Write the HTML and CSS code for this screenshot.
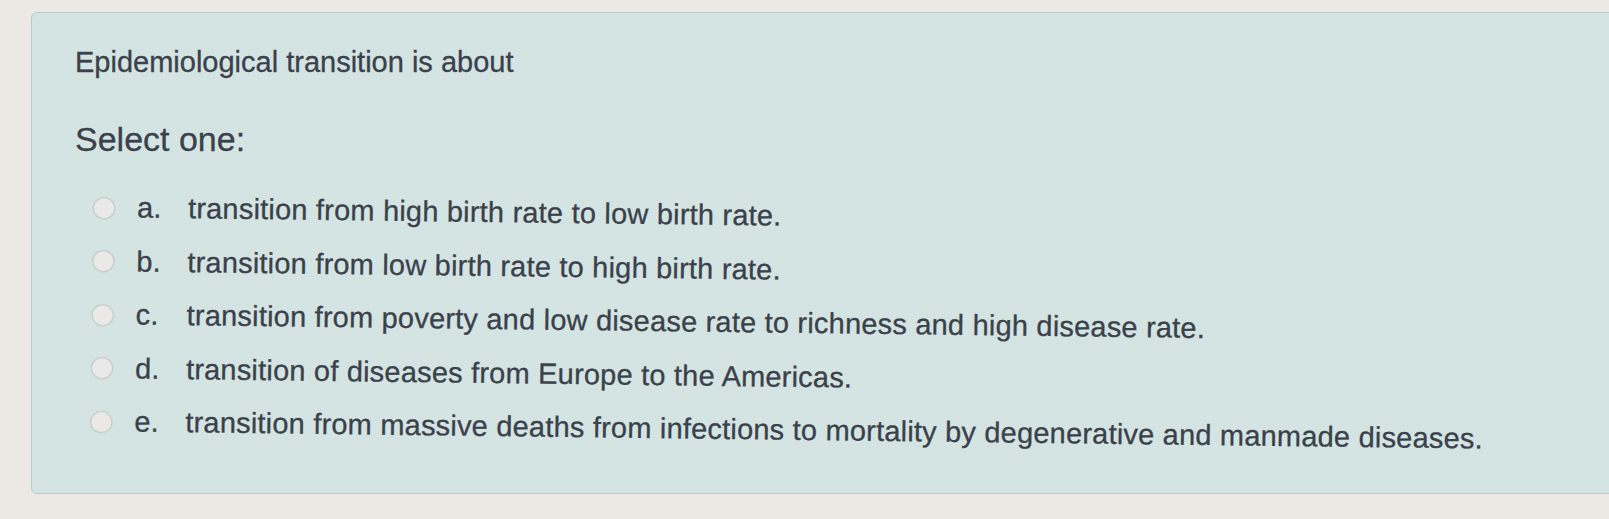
FILE: index.html
```html
<!DOCTYPE html>
<html lang="en">
<head>
<meta charset="utf-8">
<title>Question</title>
<link rel="stylesheet" href="styles.css">
</head>
<body>
<div class="page">
  <div class="question">
    <div class="qtext">Epidemiological transition is about</div>
    <div class="prompt">Select one:</div>
    <div class="answers">
      <div class="opt"><span class="radio"></span><span class="letter">a.</span><span class="txt">transition from high birth rate to low birth rate.</span></div>
      <div class="opt"><span class="radio"></span><span class="letter">b.</span><span class="txt">transition from low birth rate to high birth rate.</span></div>
      <div class="opt"><span class="radio"></span><span class="letter">c.</span><span class="txt">transition from poverty and low disease rate to richness and high disease rate.</span></div>
      <div class="opt"><span class="radio"></span><span class="letter">d.</span><span class="txt">transition of diseases from Europe to the Americas.</span></div>
      <div class="opt"><span class="radio"></span><span class="letter">e.</span><span class="txt">transition from massive deaths from infections to mortality by degenerative and manmade diseases.</span></div>
    </div>
  </div>
</div>
</body>
</html>
```

FILE: styles.css
```css
html, body {
  margin: 0;
  padding: 0;
}
body {
  background: #ece8e4;
  width: 1609px;
  height: 519px;
  overflow: hidden;
  font-family: "Liberation Sans", Arial, sans-serif;
  color: #3b414b;
  -webkit-text-stroke: 0.3px #3b414b;
}
.page {
  padding-top: 12px;
  padding-left: 31px;
}
.question {
  width: 1620px;
  height: 482px;
  box-sizing: border-box;
  background: #d4e4e2;
  border: 1px solid #b3cbca;
  border-radius: 6px;
  padding: 33px 0 0 43px;
}
.qtext {
  font-size: 29px;
  line-height: 32px;
}
.prompt {
  margin-top: 42px;
  font-size: 34px;
  line-height: 38px;
}
.answers {
  margin-top: 23px;
  margin-left: 18px;
  display: flex;
  flex-direction: column;
  transform: rotate(0.72deg);
  transform-origin: 0 30px;
}
.opt {
  height: 53.5px;
  display: flex;
  align-items: center;
  font-size: 29px;
  letter-spacing: 0.2px;
}
.radio {
  width: 22px;
  height: 22px;
  box-sizing: border-box;
  border-radius: 50%;
  background: #eae9e7;
  border: 1px solid #c6cdcc;
  box-shadow: 0 0 2px rgba(0,0,0,0.08);
  flex: none;
}
.letter {
  margin-left: 22px;
  width: 51px;
  flex: none;
}
.txt {
  white-space: nowrap;
}
```
